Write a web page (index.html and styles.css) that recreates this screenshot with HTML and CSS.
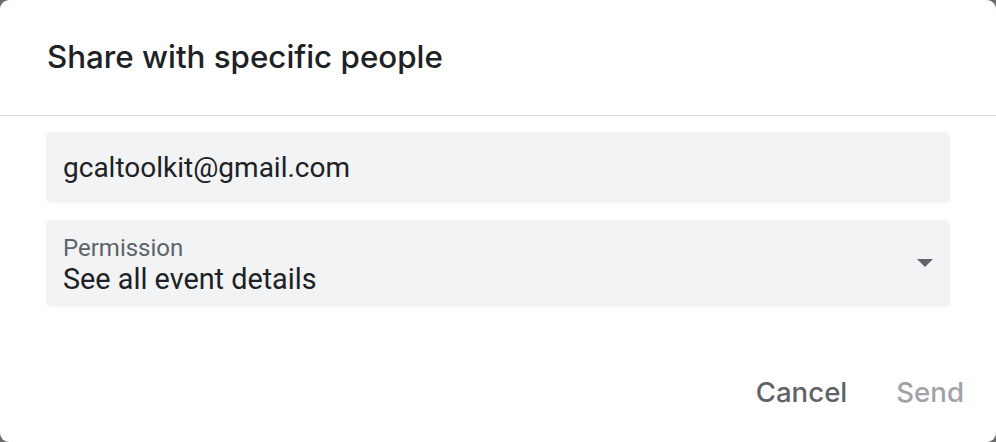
FILE: index.html
```html
<!DOCTYPE html>
<html lang="en">
<head>
<meta charset="utf-8">
<title>Share with specific people</title>
<link rel="stylesheet" href="styles.css">
</head>
<body>
<div class="dialog">
  <div class="header">
    <h1 class="title">Share with specific people</h1>
  </div>
  <div class="content">
    <div class="field email">gcaltoolkit@gmail.com</div>
    <div class="field select">
      <div class="select-text">
        <div class="label">Permission</div>
        <div class="value">See all event details</div>
      </div>
      <svg class="arrow" width="16" height="8" viewBox="0 0 16 8"><path d="M0 0h16L8 8z" fill="#5f6368"/></svg>
    </div>
  </div>
  <div class="actions">
    <button class="btn cancel">Cancel</button>
    <button class="btn send" disabled>Send</button>
  </div>
</div>
</body>
</html>
```

FILE: styles.css
```css
html, body {
  margin: 0;
  padding: 0;
  background: #6a6a6a;
}
.dialog {
  width: 996px;
  height: 442px;
  background: #fff;
  border-radius: 9px;
  display: flex;
  flex-direction: column;
  font-family: Roboto, "Liberation Sans", sans-serif;
  color: #202124;
  overflow: hidden;
}
.header {
  height: 116px;
  box-sizing: border-box;
  border-bottom: 1px solid #dadce0;
  padding: 35px 47px 0;
}
.title {
  margin: 0;
  font-family: Inter, "Open Sans", sans-serif;
  font-weight: 500;
  font-size: 31.3px;
  line-height: 44px;
  color: #202124;
}
.content {
  padding: 16px 46px 0;
  display: flex;
  flex-direction: column;
  gap: 17px;
}
.field {
  background: #f1f3f4;
  border-radius: 5px;
  box-sizing: border-box;
  padding: 0 17px;
}
.email {
  height: 71px;
  font-size: 28px;
  line-height: 32px;
  padding-top: 20px;
}
.select {
  height: 87px;
  display: flex;
  align-items: flex-start;
  justify-content: space-between;
  padding-top: 14px;
}
.label {
  font-size: 24px;
  color: #5f6368;
  line-height: 28px;
}
.value {
  font-size: 28.8px;
  line-height: 32px;
  margin-top: 1px;
}
.arrow {
  margin-top: 25px;
}
.actions {
  margin-top: auto;
  display: flex;
  justify-content: flex-end;
  gap: 49px;
  padding: 0 32px 30px;
}
.btn {
  background: none;
  border: 0;
  padding: 0;
  font-family: Inter, "Open Sans", sans-serif;
  font-weight: 500;
  font-size: 27.6px;
  line-height: 40px;
  color: #5f6368;
}
.send {
  color: #9fa3a8;
}
```
